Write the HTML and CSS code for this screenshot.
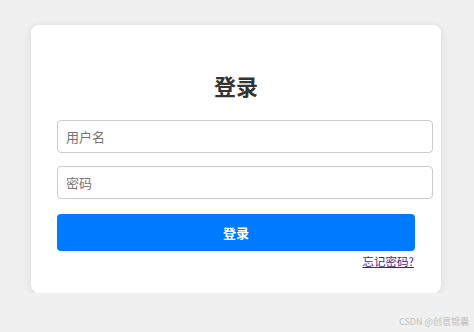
FILE: index.html
```html
<!DOCTYPE html>
<html lang="zh">
<head>
<meta charset="utf-8">
<title>登录</title>
<link rel="stylesheet" href="styles.css">
</head>
<body>
<div class="page">
  <form class="card">
    <h2 class="title">登录</h2>
    <input class="field" type="text" placeholder="用户名">
    <input class="field" type="password" placeholder="密码">
    <button class="btn" type="button">登录</button>
    <div class="links"><a class="forgot" href="#">忘记密码?</a></div>
  </form>
</div>
<div class="watermark">CSDN @创意锦囊</div>
</body>
</html>
```
FILE: styles.css
```css
html, body {
  margin: 0;
  padding: 0;
  background: #f0f0f0;
  font-family: "Noto Sans CJK SC", "Noto Sans", sans-serif;
}
.page {
  display: flex;
  justify-content: center;
  padding: 25px 2px 0 0;
}
.card {
  width: 358px;
  padding: 0 26px 23px 26px;
  background: #fff;
  border-radius: 8px;
  box-shadow: 0 2px 10px rgba(0, 0, 0, 0.1);
  display: flex;
  flex-direction: column;
}
.title {
  margin: 45px 0 20px 0;
  font-size: 22px;
  line-height: 30px;
  font-weight: bold;
  color: #333;
  text-align: center;
}
.field {
  box-sizing: content-box;
  width: 100%;
  height: 31px;
  padding: 0 8px;
  margin: 0 0 13px 0;
  border: 1px solid #ccc;
  border-radius: 4px;
  font-family: inherit;
  font-size: 13px;
  color: #333;
  background: #fff;
  outline: none;
}
.field::placeholder {
  color: #757575;
}
.field + .btn {
  margin-top: 2px;
}
.btn {
  height: 37px;
  border: none;
  border-radius: 4px;
  background: #007bff;
  color: #fff;
  font-family: inherit;
  font-size: 13px;
  font-weight: bold;
  cursor: pointer;
}
.links {
  display: flex;
  justify-content: flex-end;
  margin-top: 2px;
  padding-right: 1px;
}
.forgot {
  font-size: 11.5px;
  line-height: 17px;
  color: #551a8b;
  text-decoration: underline;
}
.watermark {
  position: absolute;
  right: 5px;
  bottom: 4px;
  font-size: 9px;
  color: #c0c0c0;
}
```
